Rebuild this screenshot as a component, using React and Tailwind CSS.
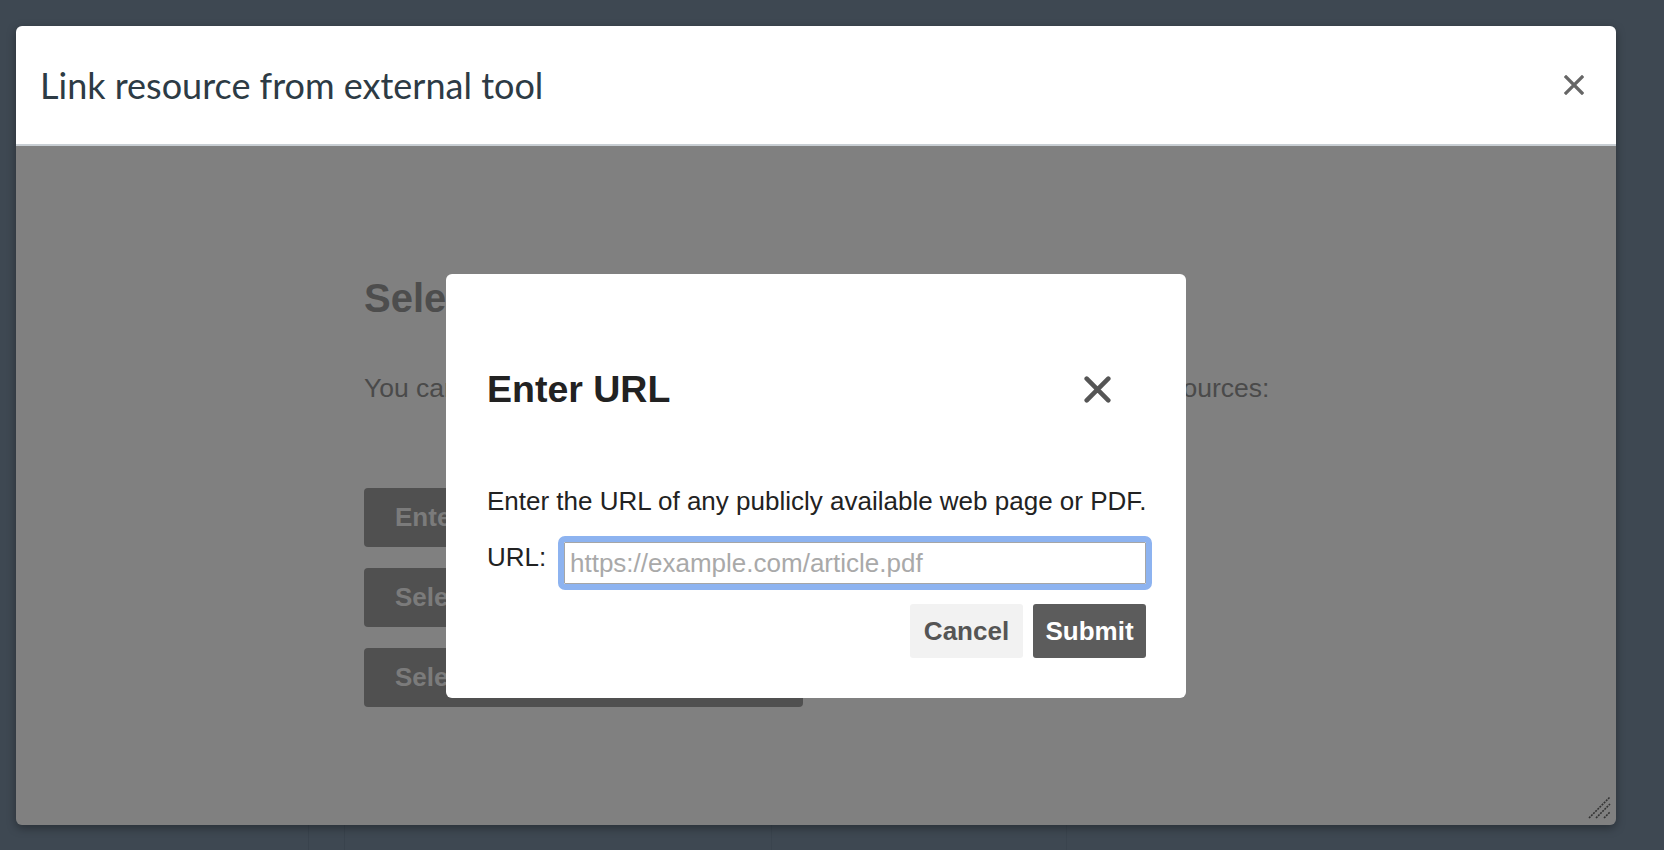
import React from "react";

function XIcon({ size, stroke, color, width }) {
  return (
    <svg width={size} height={size} viewBox="0 0 20 20" fill="none">
      <path d="M2 2 L18 18 M18 2 L2 18" stroke={color} strokeWidth={width} strokeLinecap={stroke} />
    </svg>
  );
}

export default function App() {
  return (
    <div className="relative w-[1664px] h-[850px] overflow-hidden bg-[#3e4852]">
      {/* background page skeleton */}
      <div className="flex flex-col h-full">
        <div className="h-[400px] shrink-0" />
        <div className="flex flex-1">
          <div className="w-[309px] border-r border-[#39434d]" />
          <div className="w-[36px] border-r border-[#39434d]" />
          <div className="w-[427px] border-r border-[#3a444e]" />
          <div className="w-[295px] border-r border-[#3a444e]" />
          <div className="flex-1" />
        </div>
      </div>

      {/* outer dialog */}
      <div className="absolute left-[16px] top-[26px] w-[1600px] h-[799px] rounded-[6px] overflow-hidden flex flex-col shadow-[0_3px_10px_rgba(0,0,0,0.35)]">
        <div className="h-[120px] shrink-0 bg-white border-b-2 border-[#c8ced3] flex items-center justify-between pl-[24px] pr-[32px]">
          <h1 className="text-[36px] leading-[44px] text-[#2d3b45] font-normal" style={{ fontFamily: "Lato, 'Open Sans', sans-serif" }}>
            Link resource from external tool
          </h1>
          <XIcon size={20} stroke="square" color="#666666" width={3.2} />
        </div>

        <div className="relative flex-1 bg-[#808080]" style={{ fontFamily: "'Liberation Sans', Arial, sans-serif" }}>
          <div className="pl-[348px] pt-[128px] flex flex-col">
            <h2 className="text-[40px] leading-[48px] font-bold text-[#4d4d4d]">Select a resource</h2>
            <p className="mt-[50px] text-[26.5px] leading-[32px] text-[#4a4a4a] whitespace-nowrap">
              You can enter a URL or choose from any of the following available resources:
            </p>
            <div className="mt-[84px] flex flex-col items-start gap-[21px]">
              <div className="h-[59px] rounded-[4px] bg-[#505050] pl-[31px] pr-[31px] flex items-center text-[26px] font-bold text-[#7b7b7b]">Enter URL</div>
              <div className="h-[59px] rounded-[4px] bg-[#505050] pl-[31px] pr-[31px] flex items-center text-[26px] font-bold text-[#7b7b7b]">Select from files</div>
              <div className="h-[59px] w-[439px] rounded-[4px] bg-[#505050] pl-[31px] flex items-center text-[26px] font-bold text-[#7b7b7b]">Select from course modules</div>
            </div>
          </div>

          {/* inner modal */}
          <div className="absolute left-[430px] top-[128px] w-[740px] h-[424px] rounded-[6px] bg-white pl-[41px] pr-[40px] pt-[93px] flex flex-col">
            <div className="flex items-center justify-between pr-[35px]">
              <h3 className="text-[37.5px] leading-[44px] font-bold text-[#222222]">Enter URL</h3>
              <XIcon size={27} stroke="round" color="#555555" width={3.4} />
            </div>
            <p className="mt-[74px] text-[26px] leading-[32px] text-[#222222] whitespace-nowrap">
              Enter the URL of any publicly available web page or PDF.
            </p>
            <div className="mt-[24px] flex items-start">
              <label className="text-[26px] leading-[32px] text-[#222222] w-[77px] shrink-0">URL:</label>
              <input
                type="text"
                placeholder="https://example.com/article.pdf"
                className="mt-[1px] flex-1 min-w-0 h-[42px] border border-[#a6a6a6] rounded-[1px] px-[5px] text-[26px] text-[#222] placeholder:text-[#a9a9a9] outline-[6px] outline-solid outline-[#8db3f0]"
                style={{ fontFamily: "'Liberation Sans', Arial, sans-serif" }}
              />
            </div>
            <div className="mt-[20px] flex justify-end gap-[10px]">
              <button className="w-[113px] h-[54px] rounded-[3px] bg-[#f2f2f2] text-[26px] font-bold text-[#555555]">Cancel</button>
              <button className="w-[113px] h-[54px] rounded-[3px] bg-[#5c5c5c] text-[26px] font-bold text-white">Submit</button>
            </div>
          </div>

          {/* resize handle */}
          <svg className="absolute right-[5px] bottom-[5px]" width="24" height="24" viewBox="0 0 24 24">
            <path d="M2 22 L23 1 M9 22 L23 8 M17 22 L23 16" stroke="#333" strokeWidth="1.6" strokeDasharray="2 1" />
          </svg>
        </div>
      </div>
    </div>
  );
}
